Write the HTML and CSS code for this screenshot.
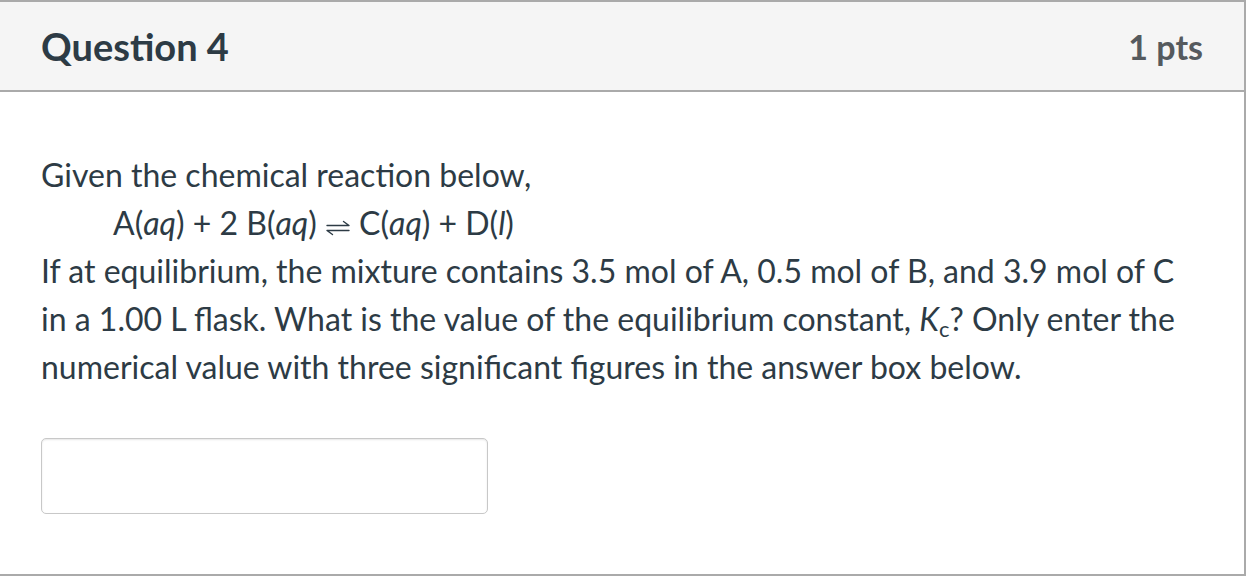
FILE: index.html
```html
<!DOCTYPE html>
<html lang="en">
<head>
<meta charset="utf-8">
<title>Question 4</title>
<link rel="stylesheet" href="styles.css">
</head>
<body>
<div class="question">
  <div class="header">
    <h2 class="title">Question 4</h2>
    <span class="points">1 pts</span>
  </div>
  <div class="content">
    <div class="text">
      <p>Given the chemical reaction below,</p>
      <p class="eq">A(<i>aq</i>) + 2 B(<i>aq</i>) <svg class="arrow" width="24" height="16" viewBox="0 0 24 16" aria-label="equilibrium"><path d="M1 5.5H23L17.5 1.5M23 10.5H1L6.5 14.5" fill="none" stroke="#2d3b45" stroke-width="1.4" stroke-linejoin="round" stroke-linecap="round"/></svg> C(<i>aq</i>) + D(<i>l</i>)</p>
      <p>If at equilibrium, the mixture contains 3.5 mol of A, 0.5 mol of B, and 3.9 mol of C in a 1.00 L flask. What is the value of the equilibrium constant, <i>K</i><sub>c</sub>? Only enter the numerical value with three significant figures in the answer box below.</p>
    </div>
    <input class="answer" type="text" aria-label="Answer">
  </div>
</div>
</body>
</html>
```

FILE: styles.css
```css
html, body {
  margin: 0;
  padding: 0;
  background: #ffffff;
}
body {
  font-family: Lato, "Open Sans", sans-serif;
  color: #2d3b45;
}
.question {
  border-top: 2px solid #aaaaaa;
  border-right: 2px solid #aaaaaa;
  border-bottom: 2px solid #aaaaaa;
  height: 572px;
  display: flex;
  flex-direction: column;
}
.header {
  height: 88px;
  background: #f5f5f5;
  border-bottom: 2px solid #aaaaaa;
  display: flex;
  align-items: center;
  justify-content: space-between;
  padding: 0 41px 0 41px;
}
.title {
  margin: 0;
  font-size: 38px;
  font-weight: 700;
  color: #2d3b45;
}
.points {
  font-size: 34px;
  font-weight: 700;
  color: #555a5e;
}
.content {
  flex: 1;
  padding: 59px 41px 0 41px;
}
.text {
  font-size: 32px;
  line-height: 48px;
}
.text p {
  margin: 0;
}
.eq {
  padding-left: 72px;
}
.arrow {
  display: inline-block;
  vertical-align: -1px;
  margin: 0 1px;
}
sub {
  font-size: 22px;
  line-height: 0;
  vertical-align: -6px;
}
.answer {
  display: block;
  margin-top: 47px;
  width: 447px;
  height: 76px;
  box-sizing: border-box;
  border: 1px solid #c8c8c8;
  border-radius: 5px;
  box-shadow: inset 0 1px 2px rgba(0, 0, 0, 0.1);
  background: #ffffff;
}
```
